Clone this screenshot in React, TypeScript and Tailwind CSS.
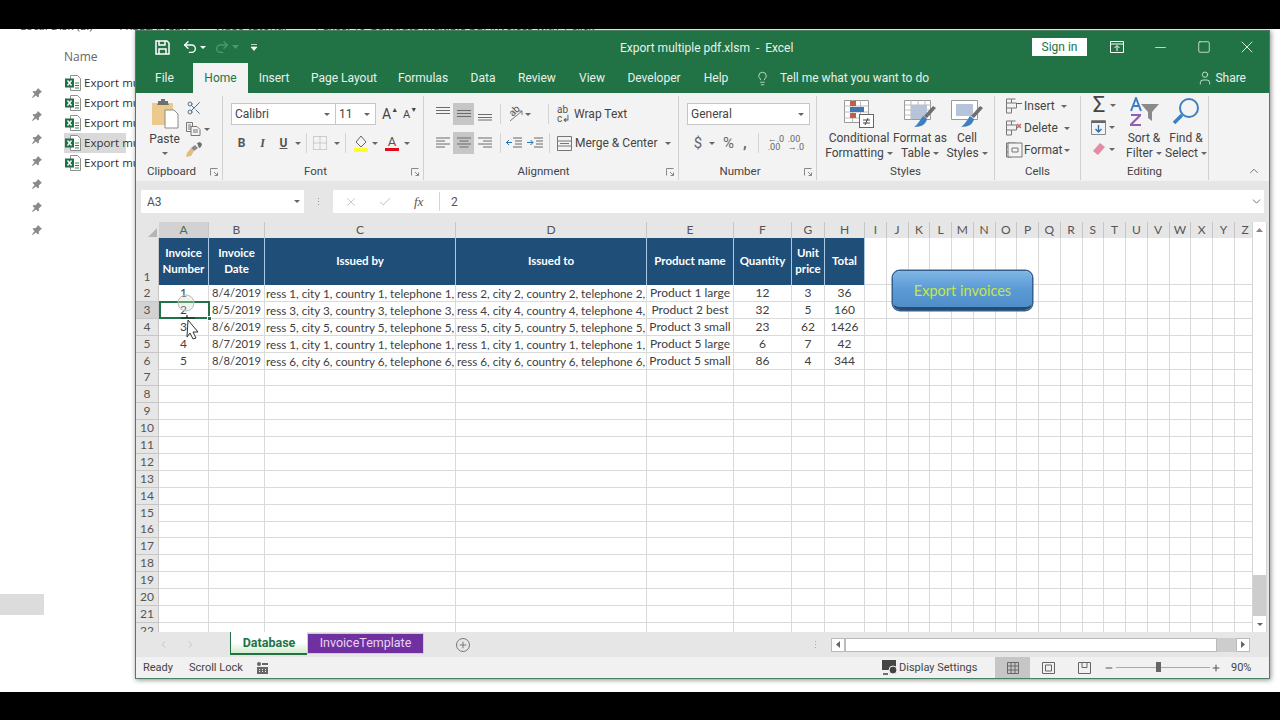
import { Undo2, Redo2, Scissors, Lightbulb, Plus, X, Check, Minus, Square, ChevronUp, ChevronDown, ChevronLeft, ChevronRight, User } from "lucide-react";

const cols = "grid grid-cols-[23px_50px_56px_191px_191px_87px_58px_33px_40px_repeat(18,21.75px)]";
const letters = "ABCDEFGHIJKLMNOPQRSTUVWXYZ".split("");

const invoices = [
  ["1", "8/4/2019", "ress 1, city 1, country 1, telephone 1,", "ress 2, city 2, country 2, telephone 2,", "Product 1 large", "12", "3", "36"],
  ["2", "8/5/2019", "ress 3, city 3, country 3, telephone 3,", "ress 4, city 4, country 4, telephone 4,", "Product 2 best", "32", "5", "160"],
  ["3", "8/6/2019", "ress 5, city 5, country 5, telephone 5,", "ress 5, city 5, country 5, telephone 5,", "Product 3 small", "23", "62", "1426"],
  ["4", "8/7/2019", "ress 1, city 1, country 1, telephone 1,", "ress 1, city 1, country 1, telephone 1,", "Product 5 large", "6", "7", "42"],
  ["5", "8/8/2019", "ress 6, city 6, country 6, telephone 6,", "ress 6, city 6, country 6, telephone 6,", "Product 5 small", "86", "4", "344"],
];

const headers = ["Invoice Number", "Invoice Date", "Issued by", "Issued to", "Product name", "Quantity", "Unit price", "Total"];
const rows = Array.from({ length: 21 }, (_, i) => i + 2);
const fileNames = [0, 1, 2, 3, 4];
const pins = [0, 1, 2, 3, 4, 5, 6];

function Caret({ className = "" }: { className?: string }) {
  return (
    <svg width="6" height="3" viewBox="0 0 6 3" className={`shrink-0 ${className}`}>
      <path d="M0 0h6L3 3z" fill="#666" />
    </svg>
  );
}

function Pin() {
  return (
    <svg width="12" height="12" viewBox="0 0 12 12">
      <path d="M7 1l4 4-1.2.6-2 2 .2 2-1 .8-2-2L1.5 11 1 10.500l2.600-3.500-2-2 .8-1 2 .2 2-2z" fill="#8a8a8a" />
    </svg>
  );
}

function XlsIcon() {
  return (
    <svg width="16" height="16" viewBox="0 0 16 16" className="shrink-0">
      <path d="M5.500.5h7l3 3v12h-10z" fill="#fff" stroke="#8f8f8f" />
      <path d="M10 8h4M10 10.500h4M10 13h4" stroke="#2e8b57" />
      <rect x="0" y="3.500" width="9" height="9" fill="#1d7044" />
      <path d="M2.500 5.500l4 5M6.500 5.500l-4 5" stroke="#fff" strokeWidth="1.300" />
    </svg>
  );
}

function Lines({ kind }: { kind: "left" | "center" | "right" | "top" | "middle" | "bottom" }) {
  const d = {
    left: "M0 2h14M0 5h9M0 8h14M0 11h9",
    center: "M0 2h14M2.500 5h9M0 8h14M2.500 11h9",
    right: "M0 2h14M5 5h9M0 8h14M5 11h9",
    top: "M0 0.500h14M0 3.500h14M0 6.500h14",
    middle: "M0 3.500h14M0 6.500h14M0 9.500h14",
    bottom: "M0 7.500h14M0 10.500h14M0 13h14",
  }[kind];
  return (
    <svg width="14" height="14" viewBox="0 0 14 14">
      <path d={d} stroke="#6b6b6b" fill="none" />
    </svg>
  );
}

function Sep() {
  return <div className="mx-[5px] h-[20px] w-px bg-[#d4d4d4]" />;
}

function GroupLabel({ text, launcher }: { text: string; launcher?: boolean }) {
  return (
    <div className={`absolute bottom-[2px] left-0 right-0 flex justify-center text-[11.500px] leading-[14px] text-[#444] ${launcher ? "pr-[15px]" : ""}`}>
      {text}
      {launcher && (
        <svg width="8" height="8" viewBox="0 0 8 8" className="absolute bottom-[2px] right-[4px]">
          <path d="M.5 7.500v-7h7M4 4l3.500 3.500M7.500 4.500v3h-3" stroke="#888" fill="none" />
        </svg>
      )}
    </div>
  );
}

function Group({ width, label, launcher, children }: { width: string; label: string; launcher?: boolean; children: React.ReactNode }) {
  return (
    <div className={`relative h-[84px] shrink-0 border-r border-[#d0d0d0] ${width}`}>
      {children}
      <GroupLabel text={label} launcher={launcher} />
    </div>
  );
}

function PasteIcon() {
  return (
    <svg width="28" height="30" viewBox="0 0 28 30">
      <rect x="1" y="4" width="21" height="22" fill="#ecc98c" />
      <path d="M7 4V2h3V0h4v2h3v2l1 2H6z" fill="#6f6f6f" />
      <path d="M14 11h9l4 4v14H14z" fill="#fff" stroke="#8a8a8a" />
    </svg>
  );
}

function CopyIcon() {
  return (
    <svg width="15" height="14" viewBox="0 0 15 14" fill="none" stroke="#777">
      <path d="M.5.500h6v9h-6zM2 3h3M2 5h3M2 7h3" />
      <path d="M5 4.500h6l3 3v6H5z" fill="#f3f3f3" />
      <path d="M7 8h5M7 10h5" />
    </svg>
  );
}

function BrushIcon() {
  return (
    <svg width="16" height="15" viewBox="0 0 16 15">
      <path d="M9 3l3 3-4 3-3-3z" fill="#8a8a8a" />
      <path d="M11 1l3-1 2 2-1 3-2 1z" fill="#6f6f6f" />
      <path d="M5 6l3 3-3 5-5 1 1-4z" fill="#e0bd7d" />
    </svg>
  );
}

function ConditionalIcon() {
  return (
    <svg width="30" height="28" viewBox="0 0 30 28">
      <path d="M.5.500h24v22H.5z" fill="#fff" stroke="#999" />
      <path d="M.5 6h24M.5 12h24M.5 18h24M8.500.500v22M16.500.500v22" stroke="#bbb" fill="none" />
      <rect x="6" y="1" width="6" height="5" fill="#c75b4a" />
      <rect x="6" y="7" width="14" height="5" fill="#3f77b5" />
      <rect x="6" y="13" width="6" height="5" fill="#c75b4a" />
      <rect x="15.500" y="14.500" width="14" height="13" fill="#fff" stroke="#666" />
      <path d="M19 20h7M19 23h7M24 18l-3 7" stroke="#444" fill="none" />
    </svg>
  );
}

function TableBrushIcon({ wide }: { wide?: boolean }) {
  return (
    <svg width="32" height="27" viewBox="0 0 32 27">
      <path d="M.5.500h26v19H.5z" fill="#fff" stroke="#999" />
      {wide && <path d="M.5 5h26M.5 10h26M.5 15h26M7 .500v19M14 .500v19M21 .500v19" stroke="#bbb" fill="none" />}
      <rect x={wide ? 7 : 5} y={wide ? 5 : 4} width={wide ? 16 : 17} height={wide ? 14 : 12} fill="#b6c3d8" />
      <path d="M29 6l3 2-9 10-3-2z" fill="#6f6f6f" />
      <path d="M19 16l4 3c-1 5-5 8-13 8 3-2 5-5 9-11z" fill="#3f7fbf" />
    </svg>
  );
}

function FinderIcon() {
  return (
    <svg width="28" height="28" viewBox="0 0 28 28" fill="none">
      <circle cx="17" cy="11" r="9" stroke="#3f7fbf" strokeWidth="2" />
      <path d="M10 18l-8 8" stroke="#3f7fbf" strokeWidth="3.500" />
    </svg>
  );
}

function CellsIcon({ kind }: { kind: "insert" | "delete" | "format" }) {
  return (
    <svg width="18" height="16" viewBox="0 0 18 16" fill="none" stroke="#777">
      <path d="M.5 1h5v4h5v5h-5v5h-5zM.5 5h5M.5 10h5M5.500 1h4" />
      {kind === "insert" && <path d="M10 5.500h6" stroke="#666" />}
      {kind === "delete" && <path d="M11 4l4 4M15 4l-4 4" stroke="#d0605a" strokeWidth="1.400" />}
      {kind === "format" && <path d="M2 1h14v14H2zM6 6h6v4H6z" fill="#f3f3f3" />}
    </svg>
  );
}

function CursorOverlay() {
  return (
    <svg width="36" height="60" viewBox="0 0 36 60" className="absolute left-[33px] top-[67px]">
      <circle cx="17" cy="14" r="8" fill="#cfe0c5" fillOpacity="0.35" stroke="#bbb" />
      <path d="M19 31l10 12-5 0 3 6-3 1-3-6-3 4z" fill="#fff" stroke="#333" />
      <path d="M12 29h14M18 26v3" stroke="#222" strokeWidth="1.200" />
    </svg>
  );
}

export default function App() {
  return (
    <div className="relative flex h-[720px] w-[1280px] flex-col overflow-hidden bg-black font-['Roboto',sans-serif] text-[#444]">
      <div className="h-[29px] shrink-0 bg-black" />

      {/* Explorer behind the Excel window */}
      <main className="relative flex-1 overflow-hidden bg-white font-['Open_Sans',sans-serif]">
        <div className="-mt-[9px] flex h-[12px] items-center gap-[10px] pl-[20px] text-[11.500px] text-[#444] whitespace-nowrap">
          <span>Local Disk (E:)</span>
          <span>&gt;</span>
          <span>FREELANCER</span>
          <span>&gt;</span>
          <span>Video tutorial</span>
          <span>&gt;</span>
          <span>1 Excel 19 Generate multiple pdf invoices with 1 click</span>
        </div>
        <div className="flex">
          <div className="flex w-[74px] flex-col items-center gap-[10.800px] pt-[55px]">
            {pins.map((p) => (
              <Pin key={p} />
            ))}
          </div>
          <div className="w-[62px] -ml-[10px] pt-[15px]">
            <div className="pb-[6px] text-[12px] leading-[20px] text-[#666]">Name</div>
            {fileNames.map((n) => (
              <div key={n} className={`flex h-[20px] items-center gap-[3px] pl-[1px] text-[11.500px] whitespace-nowrap text-[#333] ${n === 3 ? "bg-[#d9d9d9]" : ""}`}>
                <XlsIcon />
                Export mu
              </div>
            ))}
          </div>
        </div>
        <div className="absolute left-0 top-[565px] h-[21px] w-[44px] bg-[#dcdcdc]" />
      </main>

      <div className="h-[28px] shrink-0 bg-black" />

      {/* Excel window */}
      <section className="absolute left-[135px] top-[30px] flex h-[649px] w-[1135px] flex-col border border-[#4b7f63] bg-[#e6e6e6] shadow-[1px_1px_5px_rgba(0,0,0,0.45)]">
        {/* title bar */}
        <header className="relative flex h-[32px] shrink-0 items-center bg-[#217346] text-white">
          <div className="flex items-center pl-[19px]">
            <svg width="15" height="15" viewBox="0 0 15 15" fill="none" stroke="#fff" strokeWidth="1.500">
              <path d="M1 1h11l2 2v11H1zM4 1v4h6V1M4 14V9h7v5" />
            </svg>
            <Undo2 size={16} strokeWidth={2} className="ml-[12px] text-white" />
            <Caret className="ml-[2px] brightness-[3]" />
            <Redo2 size={16} strokeWidth={2} className="ml-[8px] text-[#4b9a70]" />
            <svg width="7" height="4" viewBox="0 0 7 4" className="ml-[2px]">
              <path d="M0 0h7L3.500 4z" fill="#4b9a70" />
            </svg>
            <svg width="8" height="8" viewBox="0 0 8 8" className="ml-[11px]">
              <path d="M1 1.500h6M1 4h6L4 7.500z" fill="#fff" stroke="#fff" strokeWidth="0.700" />
            </svg>
          </div>
          <div className="absolute left-[484px] top-[9px] text-[12px] leading-[16px] text-[#e8f1ec]">Export multiple pdf.xlsm&nbsp; -&nbsp; Excel</div>
          <div className="ml-auto flex items-center">
            <button className="h-[18px] w-[55px] bg-white text-[12px] leading-[18px] text-[#217346]">Sign in</button>
            <svg width="14" height="12" viewBox="0 0 14 12" fill="none" stroke="#fff" className="ml-[23px]">
              <path d="M.5.500h13v11H.5zM.5 3h13M7 10V5M4.500 7L7 4.500 9.500 7" />
            </svg>
            <Minus size={17} strokeWidth={1} className="ml-[28px]" />
            <Square size={14} strokeWidth={1.200} className="ml-[28px]" />
            <X size={20} strokeWidth={1} className="ml-[26px] mr-[12px]" />
          </div>
        </header>

        {/* tabs */}
        <nav className="flex h-[30px] shrink-0 items-start bg-[#217346] pl-[19px] text-[12px] leading-[20px] text-[#e8f1ec]">
          <div className="flex h-[30px] w-[38px] items-center">File</div>
          <div className="flex h-[30px] w-[55px] items-center justify-center bg-[#f3f3f3] text-[#217346]">Home</div>
          <div className="flex h-[30px] w-[52px] items-center justify-center">Insert</div>
          <div className="flex h-[30px] w-[88px] items-center justify-center">Page Layout</div>
          <div className="flex h-[30px] w-[70px] items-center justify-center">Formulas</div>
          <div className="flex h-[30px] w-[50px] items-center justify-center">Data</div>
          <div className="flex h-[30px] w-[58px] items-center justify-center">Review</div>
          <div className="flex h-[30px] w-[52px] items-center justify-center">View</div>
          <div className="flex h-[30px] w-[72px] items-center justify-center">Developer</div>
          <div className="flex h-[30px] w-[52px] items-center justify-center">Help</div>
          <div className="flex h-[30px] items-center pl-[13px]">
            <Lightbulb size={15} strokeWidth={1.200} />
            <span className="ml-[10px]">Tell me what you want to do</span>
          </div>
          <div className="ml-auto mr-[23px] flex h-[30px] items-center gap-[2px]">
            <User size={16} strokeWidth={1.200} />
            Share
          </div>
        </nav>

        {/* ribbon */}
        <div className="flex h-[88px] shrink-0 items-start bg-[#f3f3f3] pt-[3px] text-[12px] text-[#444]">
          <Group width="w-[87px]" label="Clipboard" launcher>
            <div className="flex pl-[14px] pt-[3px]">
              <div className="flex w-[29px] flex-col items-center">
                <PasteIcon />
                <span className="mt-[3px] leading-[14px]">Paste</span>
                <Caret className="mt-[6px]" />
              </div>
              <div className="ml-[7px] flex flex-col gap-[6px] pt-[1px]">
                <Scissors size={16} strokeWidth={1.500} className="text-[#4f6f88]" />
                <div className="flex items-center gap-[3px]">
                  <CopyIcon />
                  <Caret />
                </div>
                <BrushIcon />
              </div>
            </div>
          </Group>

          <Group width="w-[201px]" label="Font" launcher>
            <div className="flex flex-col pl-[8px] pt-[7px]">
              <div className="flex items-center">
                <div className="flex h-[22px] w-[105px] items-center justify-between border border-[#c6c6c6] bg-white px-[3px] pr-[5px]">
                  Calibri <Caret />
                </div>
                <div className="flex h-[22px] w-[40px] items-center justify-between border border-l-0 border-[#c6c6c6] bg-white px-[3px] pr-[5px]">
                  11 <Caret />
                </div>
                <span className="ml-[6px] text-[14px] leading-none">A</span>
                <span className="mb-[8px] text-[7px]">▲</span>
                <span className="ml-[5px] text-[11px] leading-none">A</span>
                <span className="mb-[8px] text-[7px]">▼</span>
              </div>
              <div className="mt-[8px] flex h-[20px] items-center font-bold text-[12px] text-[#555]">
                <span className="w-[21px] text-center">B</span>
                <span className="w-[21px] text-center italic font-['Liberation_Serif',serif]">I</span>
                <span className="w-[21px] text-center underline">U</span>
                <Caret className="ml-[1px]" />
                <Sep />
                <svg width="14" height="14" viewBox="0 0 14 14" fill="none" stroke="#aaa" strokeDasharray="1 1" className="ml-[1px]">
                  <path d="M.5.500h13v13H.5zM.5 7h13M7 .500v13" />
                </svg>
                <Caret className="ml-[7px]" />
                <Sep />
                <svg width="16" height="17" viewBox="0 0 16 17" className="ml-[2px]">
                  <path d="M8 1l5 6-5 5-5-5z" fill="none" stroke="#666" />
                  <rect x="1" y="13" width="14" height="4" fill="#ffff2e" />
                </svg>
                <Caret className="ml-[3px]" />
                <div className="ml-[7px] flex w-[14px] flex-col items-center">
                  <span className="text-[13px] leading-[13px] font-normal">A</span>
                  <div className="h-[3px] w-[14px] bg-[#e00b1c]" />
                </div>
                <Caret className="ml-[5px]" />
              </div>
            </div>
          </Group>

          <Group width="w-[255px]" label="Alignment" launcher>
            <div className="flex flex-col pl-[8px] pt-[7px]">
              <div className="flex h-[22px] items-center">
                <span className="flex w-[21px] justify-center"><Lines kind="top" /></span>
                <span className="flex h-[22px] w-[21px] items-center justify-center bg-[#c6c6c6]"><Lines kind="middle" /></span>
                <span className="flex w-[21px] justify-center"><Lines kind="bottom" /></span>
                <Sep />
                <div className="relative h-[16px] w-[18px]">
                  <span className="absolute left-[3px] top-[-2px] -rotate-45 text-[10px] leading-[14px] text-[#555]">ab</span>
                  <svg width="18" height="16" viewBox="0 0 18 16" fill="none" stroke="#777" className="absolute left-0 top-0">
                    <path d="M4 15L16 5M12 5h4v4" />
                  </svg>
                </div>
                <Caret className="ml-[1px]" />
                <div className="ml-[17px] mr-[8px] h-[20px] w-px bg-[#d4d4d4]" />
                <span className="w-[16px] text-[10px] leading-[9px] text-[#555]">ab<br />c↲</span>
                <span className="ml-[1px] whitespace-nowrap">Wrap Text</span>
              </div>
              <div className="mt-[7px] flex h-[22px] items-center">
                <span className="flex w-[21px] justify-center"><Lines kind="left" /></span>
                <span className="flex h-[22px] w-[21px] items-center justify-center bg-[#c6c6c6]"><Lines kind="center" /></span>
                <span className="flex w-[21px] justify-center"><Lines kind="right" /></span>
                <Sep />
                <svg width="16" height="12" viewBox="0 0 16 12" fill="none" stroke="#666">
                  <path d="M7 1h9M9 4h7M9 7h7M7 10h9" />
                  <path d="M0 5.500h6M3 3L.5 5.500 3 8" stroke="#2d6fb0" />
                </svg>
                <svg width="16" height="12" viewBox="0 0 16 12" fill="none" stroke="#666" className="ml-[5px]">
                  <path d="M7 1h9M9 4h7M9 7h7M7 10h9" />
                  <path d="M0 5.500h6M3.500 3L6 5.500 3.500 8" stroke="#2d6fb0" />
                </svg>
                <div className="mx-[6px] h-[20px] w-px bg-[#d4d4d4]" />
                <svg width="15" height="15" viewBox="0 0 15 15" fill="none" stroke="#777" className="ml-[1px]">
                  <path d="M.5.500h14v14H.5zM.5 5h14M.5 10h14M3 7.500h9" />
                </svg>
                <span className="ml-[3px] whitespace-nowrap">Merge &amp; Center</span>
                <Caret className="ml-[8px]" />
              </div>
            </div>
          </Group>

          <Group width="w-[138px]" label="Number" launcher>
            <div className="flex flex-col pl-[8px] pt-[7px]">
              <div className="flex h-[22px] w-[123px] items-center justify-between border border-[#c6c6c6] bg-white px-[3px] pr-[5px]">
                General <Caret />
              </div>
              <div className="mt-[7px] flex h-[22px] items-center">
                <span className="ml-[6px] w-[10px] text-center text-[15px] text-[#666]">$</span>
                <Caret className="ml-[6px]" />
                <span className="ml-[8px] text-[15px] text-[#666]">%</span>
                <span className="ml-[9px] text-[15px] font-bold text-[#666]">,</span>
                <div className="ml-[11px] h-[20px] w-px bg-[#d4d4d4]" />
                <span className="ml-[9px] w-[16px] text-[9px] leading-[8px] text-[#666]">←.0<br />.00</span>
                <span className="ml-[4px] w-[16px] text-[9px] leading-[8px] text-[#666]">.00<br />→.0</span>
              </div>
            </div>
          </Group>

          <Group width="w-[178px]" label="Styles">
            <div className="flex pl-[6px] pt-[4px] text-center leading-[15px]">
              <div className="flex w-[72px] flex-col items-center whitespace-nowrap">
                <ConditionalIcon />
                <span className="mt-[3px]">Conditional</span>
                <span className="flex items-center gap-[3px]">Formatting <Caret /></span>
              </div>
              <div className="flex w-[50px] flex-col items-center whitespace-nowrap">
                <TableBrushIcon wide />
                <span className="mt-[4px]">Format as</span>
                <span className="flex items-center gap-[3px]">Table <Caret /></span>
              </div>
              <div className="flex w-[44px] flex-col items-center whitespace-nowrap">
                <TableBrushIcon />
                <span className="mt-[4px]">Cell</span>
                <span className="flex items-center gap-[3px]">Styles <Caret /></span>
              </div>
            </div>
          </Group>

          <Group width="w-[86px]" label="Cells">
            <div className="flex flex-col gap-[6px] pl-[11px] pt-[2px] leading-[16px]">
              <div className="flex items-center">
                <CellsIcon kind="insert" />
                <span>Insert</span>
                <Caret className="ml-[6px]" />
              </div>
              <div className="flex items-center">
                <CellsIcon kind="delete" />
                <span>Delete</span>
                <Caret className="ml-[6px]" />
              </div>
              <div className="flex items-center">
                <CellsIcon kind="format" />
                <span>Format</span>
                <Caret className="ml-[2px]" />
              </div>
            </div>
          </Group>

          <Group width="w-[128px]" label="Editing">
            <div className="flex pl-[10px] pt-[1px]">
              <div className="flex w-[32px] flex-col gap-[6px]">
                <div className="flex h-[16px] items-center gap-[3px]">
                  <span className="w-[16px] text-center text-[22px] leading-none text-[#444]">Σ</span>
                  <Caret />
                </div>
                <div className="flex h-[16px] items-center gap-[3px]">
                  <svg width="15" height="15" viewBox="0 0 15 15" fill="none" stroke="#888">
                    <path d="M.5.500h14v14H.5z" />
                    <path d="M.5 2h14" stroke="#666" strokeWidth="2" />
                    <path d="M7.500 5v7M4.500 9l3 3 3-3" stroke="#2d6fb0" strokeWidth="1.400" />
                  </svg>
                  <Caret />
                </div>
                <div className="flex h-[16px] items-center gap-[3px]">
                  <svg width="15" height="13" viewBox="0 0 15 13">
                    <path d="M9 0l5 4-7 8-5-4z" fill="#e78aa5" />
                  </svg>
                  <Caret />
                </div>
              </div>
              <div className="flex w-[42px] flex-col items-center leading-[15px]">
                <svg width="30" height="30" viewBox="0 0 30 30">
                  <path d="M2 14L7 1l5 13M4 9h6" fill="none" stroke="#3f7fbf" strokeWidth="2" />
                  <path d="M2 17h10v2L4 27h8v2H1v-2l8-8H2z" fill="#8f5fb0" />
                  <path d="M12 7h18l-7 8v9l-4-3v-6z" fill="#8a8a8a" />
                </svg>
                <span className="mt-[4px] whitespace-nowrap">Sort &amp;</span>
                <span className="flex items-center gap-[3px] whitespace-nowrap">Filter <Caret /></span>
              </div>
              <div className="flex w-[42px] flex-col items-center leading-[15px]">
                <FinderIcon />
                <span className="mt-[6px] whitespace-nowrap">Find &amp;</span>
                <span className="flex items-center gap-[3px] whitespace-nowrap">Select <Caret /></span>
              </div>
            </div>
          </Group>

          <div className="relative h-[84px] flex-1">
            <ChevronUp size={14} strokeWidth={1.500} className="absolute bottom-[2px] right-[8px] text-[#666]" />
          </div>
        </div>

        {/* formula bar */}
        <div className="flex h-[41px] shrink-0 items-center bg-[#e6e6e6] pl-[5px] pr-[5px] text-[12px]">
          <div className="flex h-[23px] w-[163px] items-center justify-between bg-white pl-[6px] pr-[4px] text-[#555]">
            A3 <Caret />
          </div>
          <div className="mx-[14px] flex flex-col gap-[2px]">
            <div className="h-px w-px bg-[#999]" />
            <div className="h-px w-px bg-[#999]" />
            <div className="h-px w-px bg-[#999]" />
          </div>
          <div className="flex h-[23px] flex-1 items-center bg-white">
            <div className="flex w-[107px] items-center border-r border-[#d4d4d4] pl-[11px]">
              <X size={14} strokeWidth={1.200} className="text-[#b5b5b5]" />
              <Check size={14} strokeWidth={1.500} className="ml-[20px] text-[#b5b5b5]" />
              <span className="ml-[22px] font-['Liberation_Serif',serif] text-[13px] italic text-[#555]">fx</span>
            </div>
            <span className="pl-[11px] text-[#555]">2</span>
            <ChevronDown size={13} strokeWidth={1.500} className="ml-auto mr-[1px] text-[#555]" />
          </div>
        </div>

        {/* sheet */}
        <div className="flex h-[410px] shrink-0 overflow-hidden font-['Lato',sans-serif]">
          <div className="relative w-[1116px] shrink-0 overflow-hidden bg-white">
            <div className={`${cols} h-[16px] bg-[#e6e6e6] text-[12px] leading-[16px] text-[#555]`}>
              <div className="flex items-end justify-end pb-[1px] pr-[2px]">
                <svg width="9" height="9" viewBox="0 0 9 9"><path d="M9 0v9H0z" fill="#b5b5b5" /></svg>
              </div>
              {letters.map((l, i) => (
                <div key={l} className={`overflow-hidden border-r border-[#c6c6c6] text-center ${i === 0 ? "bg-[#d2d2d2] text-[#4a6a55]" : ""}`}>
                  {l}
                </div>
              ))}
            </div>

            <div className={`${cols} h-[47px] text-[11.500px] leading-[16px] text-white`}>
              <div className="flex items-end justify-center border-r border-[#c6c6c6] bg-[#e6e6e6] text-[12px] text-[#555]">1</div>
              {headers.map((h) => (
                <div key={h} className="flex items-center justify-center border-r border-[#a9c8e4] bg-[#1f4e79] px-[2px] pb-[1px] text-center font-bold">
                  {h}
                </div>
              ))}
              {letters.slice(8).map((l) => (
                <div key={l} className="border-r border-b border-[#dadada]" />
              ))}
            </div>

            {rows.map((r) => {
              const data = invoices[r - 2];
              return (
                <div key={r} className={`${cols} h-[16.900px] text-[12px] leading-[16px] text-[#404040]`}>
                  <div className={`border-r border-b border-[#c6c6c6] text-center text-[#555] ${r === 3 ? "bg-[#d2d2d2] text-[#4a6a55]" : "bg-[#e6e6e6]"}`}>{r}</div>
                  {letters.map((l, i) => {
                    const value = data && i < 8 ? data[i] : "";
                    const clipped = i === 2 || i === 3;
                    return (
                      <div
                        key={l}
                        className={`overflow-hidden whitespace-nowrap border-r border-b border-[#dadada] ${clipped ? "pl-[1px] text-left text-[11.700px]" : "text-center"} ${i === 1 ? "text-[11.200px]" : ""}`}
                      >
                        {value}
                      </div>
                    );
                  })}
                </div>
              );
            })}

            {/* active cell, cursor and the macro button sit over the grid */}
            <div className="absolute left-[23px] top-[79px] h-[18px] w-[51px] border-2 border-[#217346]" />
            <div className="absolute left-[71px] top-[94px] h-[5px] w-[5px] border border-white bg-[#217346]" />
            <CursorOverlay />
            <button className="absolute left-[757px] top-[49px] flex h-[39px] w-[139px] items-center justify-center rounded-[7px] border-b-[3px] border-[#2c4a6e] bg-gradient-to-b from-[#7fb6e6] via-[#5b9bd5] to-[#4f8ec9] pt-[3px] font-['Lato',sans-serif] text-[14.500px] text-[#c4e64a] shadow-[0_0_0_1.500px_#34608e]">
              Export invoices
            </button>
          </div>
          <div className="flex w-[15px] shrink-0 flex-col justify-between border-x border-[#d4d4d4] bg-[#f1f1f1]">
            <div className="flex h-[16px] items-center justify-center bg-white">
              <svg width="7" height="4" viewBox="0 0 7 4"><path d="M0 4h7L3.500 0z" fill="#888" /></svg>
            </div>
            <div className="mx-0 flex-1 bg-[#cdcdcd]">
              <div className="h-[337px] bg-white" />
            </div>
            <div className="flex h-[16px] items-center justify-center bg-white">
              <Caret />
            </div>
          </div>
        </div>

        {/* sheet tabs */}
        <div className="flex h-[25px] shrink-0 items-center bg-[#e6e6e6] text-[12.500px]">
          <ChevronLeft size={11} className="ml-[22px] text-[#c0c0c0]" />
          <ChevronRight size={11} className="ml-[16px] text-[#c0c0c0]" />
          <div className="ml-[34px] flex h-[23px] w-[77px] items-center justify-center self-start border-b-2 border-l border-[#217346] bg-gradient-to-b from-white via-white to-[#d5ecd0] pt-[2px] font-bold text-[#217346]">
            Database
          </div>
          <div className="ml-[1px] mt-[2px] flex h-[19px] w-[115px] items-center justify-center self-start bg-[#7030a0] text-[#e6d4f3] outline outline-1 outline-[#d8c4e6]">
            InvoiceTemplate
          </div>
          <div className="ml-[33px] flex h-[14px] w-[14px] items-center justify-center rounded-full border border-[#777]">
            <Plus size={10} strokeWidth={2} className="text-[#666]" />
          </div>
          <div className="ml-[345px] flex flex-col gap-[2px]">
            <div className="h-px w-px bg-[#aaa]" />
            <div className="h-px w-px bg-[#aaa]" />
            <div className="h-px w-px bg-[#aaa]" />
          </div>
          <div className="ml-[15px] flex h-[14px] w-[14px] items-center justify-center border border-[#bbb] bg-white text-[#555]">
            <svg width="4" height="7" viewBox="0 0 4 7"><path d="M4 0v7L0 3.500z" fill="#666" /></svg>
          </div>
          <div className="h-[14px] w-[372px] border border-[#bbb] bg-white" />
          <div className="h-[14px] w-[19px] bg-[#cdcdcd]" />
          <div className="flex h-[14px] w-[14px] items-center justify-center border border-[#bbb] bg-white">
            <svg width="4" height="7" viewBox="0 0 4 7"><path d="M0 0v7l4-3.500z" fill="#666" /></svg>
          </div>
        </div>

        {/* status bar */}
        <footer className="flex flex-1 items-center bg-[#f1f1f1] pl-[7px] text-[11px] text-[#444]">
          <span className="mt-[1px] w-[46px]">Ready</span>
          <span className="mt-[1px] w-[67px]">Scroll Lock</span>
          <svg width="12" height="12" viewBox="0 0 12 12" fill="#666">
            <circle cx="3" cy="2" r="2" />
            <path d="M6 1h6v2H6zM1 5h11v7H1z" />
            <path d="M3 7h1v1H3zM6 7h1v1H6zM9 7h1v1H9zM3 9h1v1H3zM6 9h1v1H6zM9 9h1v1H9z" fill="#f1f1f1" />
          </svg>
          <svg width="16" height="15" viewBox="0 0 16 15" className="ml-[614px]">
            <rect x="0" y="0" width="14" height="10" fill="#444" />
            <circle cx="11" cy="10" r="4" fill="#444" stroke="#f1f1f1" />
            <path d="M1 14h5" stroke="#444" strokeWidth="1.500" />
          </svg>
          <span className="ml-[1px] mt-[1px] w-[80px] whitespace-nowrap">Display Settings</span>
          <div className="ml-[16px] flex h-full w-[35px] items-center justify-center bg-[#c6c6c6]">
            <svg width="12" height="12" viewBox="0 0 12 12" fill="none" stroke="#666"><path d="M.5.500h11v11H.5zM.5 4h11M.5 8h11M4 .500v11M8 .500v11" /></svg>
          </div>
          <svg width="13" height="12" viewBox="0 0 13 12" fill="none" stroke="#666" className="ml-[12px]"><path d="M.5.500h12v11H.5zM3.500 3h6v6h-6z" /></svg>
          <svg width="13" height="12" viewBox="0 0 13 12" fill="none" stroke="#666" className="ml-[23px]"><path d="M.5.500h12v11H.5zM4 .500v5h5v-5" /></svg>
          <span className="ml-[13px] flex items-center text-[#555]"><Minus size={10} strokeWidth={2.500} /></span>
          <div className="relative ml-[2px] h-px w-[94px] bg-[#aaa]">
            <div className="absolute left-[40px] top-[-5px] h-[10px] w-[5px] bg-[#666]" />
          </div>
          <Plus size={10} strokeWidth={2.500} className="ml-[1px] text-[#555]" />
          <span className="ml-[10px] mt-[1px]">90%</span>
        </footer>
      </section>
    </div>
  );
}
